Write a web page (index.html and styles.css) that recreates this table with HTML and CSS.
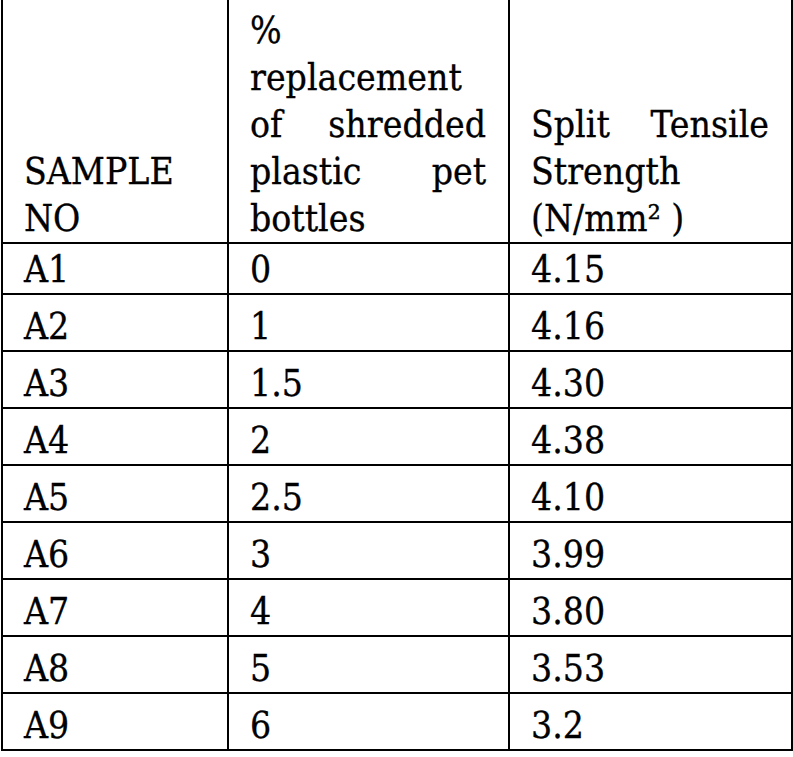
FILE: index.html
```html
<!DOCTYPE html>
<html lang="en">
<head>
  <title>Split tensile strength</title>
  <link rel="stylesheet" href="styles.css">
</head>
<body>
  <table class="results">
    <colgroup>
      <col class="col-sample">
      <col class="col-pet">
      <col class="col-strength">
    </colgroup>
    <tr class="head">
      <td>SAMPLE NO</td>
      <td class="just">% replacement of shredded plastic pet bottles</td>
      <td class="just">Split Tensile Strength (N/mm² )</td>
    </tr>
    <tr class="first"><td>A1</td><td>0</td><td>4.15</td></tr>
    <tr><td>A2</td><td>1</td><td>4.16</td></tr>
    <tr><td>A3</td><td>1.5</td><td>4.30</td></tr>
    <tr><td>A4</td><td>2</td><td>4.38</td></tr>
    <tr><td>A5</td><td>2.5</td><td>4.10</td></tr>
    <tr><td>A6</td><td>3</td><td>3.99</td></tr>
    <tr><td>A7</td><td>4</td><td>3.80</td></tr>
    <tr><td>A8</td><td>5</td><td>3.53</td></tr>
    <tr><td>A9</td><td>6</td><td>3.2</td></tr>
  </table>
</body>
</html>
```
FILE: styles.css
```css
*{
  margin: 0;
  padding: 0;
  box-sizing: border-box;
}
body{
  background: #fff;
  color: #000;
  font-family: "DejaVu Serif Condensed", "DejaVu Serif", serif;
  font-stretch: condensed;
  font-size: 37px;
  line-height: 47px;
}
.results{
  margin-left: 1px;
  width: 792px;
  table-layout: fixed;
  border-collapse: separate;
  border-spacing: 0;
}
.col-sample{ width: 228px; }
.col-pet{ width: 281px; }
.col-strength{ width: 283px; }
.results td{
  border-right: 2px solid #000;
  border-bottom: 2px solid #000;
  padding: 0 22px 0 21px;
  vertical-align: bottom;
  text-align: left;
  -webkit-text-stroke: 0.3px #000;
}
.results td:first-child{
  border-left: 2px solid #000;
}
.results tr{
  height: 57px;
}
.results tr.head{
  height: 244px;
}
.results tr.first{
  height: 51px;
}
.results td.just{
  text-align: justify;
}
```
